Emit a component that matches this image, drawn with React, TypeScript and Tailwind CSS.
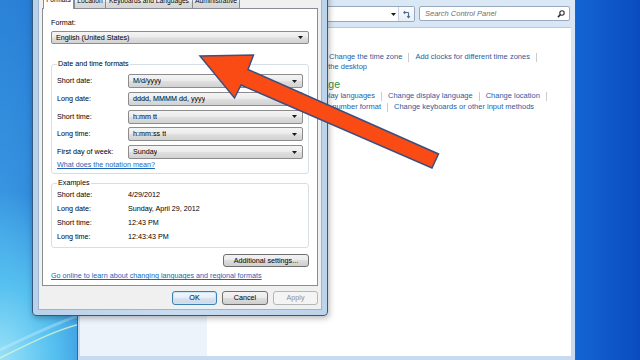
import type { ReactNode } from 'react';

function Caret() {
  return (
    <svg width="5" height="3" viewBox="0 0 5 3" className="shrink-0">
      <path d="M0 0H5L2.5 3Z" fill="#1a1a1a" />
    </svg>
  );
}

function Combo({ value, className = 'h-[14px]' }: { value: string; className?: string }) {
  return (
    <div
      className={`flex-1 flex items-center justify-between pl-[4px] pr-[5px] rounded-[2px] border border-[#8c8c8c] bg-[linear-gradient(#f4f4f4,#ececec_45%,#dedede_55%,#d2d2d2)] ${className}`}
    >
      <span className="truncate">{value}</span>
      <Caret />
    </div>
  );
}

const buttonKinds = {
  normal: 'border-[#707070] bg-[linear-gradient(#f2f2f2,#ebebeb_50%,#dddddd_50%,#cfcfcf)] text-black',
  primary:
    'border-[#3c7fb1] bg-[linear-gradient(#f2f6fa,#e6eef6_50%,#d8e3ee_50%,#cad9e8)] shadow-[inset_0_0_0_1px_#c8e6f8] text-black',
  disabled: 'border-[#b3b7ba] bg-[#f4f4f4] text-[#8f8f8f]',
};

function Button({
  children,
  kind = 'normal',
  className = '',
}: {
  children: ReactNode;
  kind?: keyof typeof buttonKinds;
  className?: string;
}) {
  return (
    <div className={`flex items-center justify-center rounded-[3px] border ${buttonKinds[kind]} ${className}`}>
      {children}
    </div>
  );
}

function Sep() {
  return <span className="shrink-0 mx-[6px] w-px h-[9px] bg-[#c9cdd3]" />;
}

function Tab({ label, className }: { label: string; className: string }) {
  return (
    <div
      className={`flex justify-center pt-[1px] border-t border-l border-[#898c95] bg-[linear-gradient(#f6f6f6,#eaeaea_50%,#dddddd_50%,#d5d5d5)] text-[6.7px] leading-[8px] whitespace-nowrap ${className}`}
    >
      {label}
    </div>
  );
}

const dateRows = [
  ['Short date:', 'M/d/yyyy'],
  ['Long date:', 'dddd, MMMM dd, yyyy'],
  ['Short time:', 'h:mm tt'],
  ['Long time:', 'h:mm:ss tt'],
  ['First day of week:', 'Sunday'],
];

const examples = [
  ['Short date:', '4/29/2012'],
  ['Long date:', 'Sunday, April 29, 2012'],
  ['Short time:', '12:43 PM'],
  ['Long time:', '12:43:43 PM'],
];

function RegionDialog() {
  return (
    <div className="absolute left-[32px] top-[-14px] w-[296px] h-[330px] p-[5px] rounded-b-[4px] border border-[#34597f] bg-[linear-gradient(90deg,#b9d1ea,#c8dcf1_50%,#bcd3ec)] shadow-[1px_2px_6px_rgba(0,0,0,0.3)]">
      <div className="h-full flex flex-col px-[3px] bg-[#f0f0f0] border border-[#9db4cc] text-[7.2px] leading-[10px]">
        {/* tabs */}
        <div className="h-[15px] shrink-0 flex items-end pl-[1px]">
          <div className="relative z-10 w-[31px] h-[16px] -mb-[1px] flex justify-center pt-[2px] bg-white border border-b-0 border-[#898c95] text-[6.7px] leading-[8px]">
            Formats
          </div>
          <Tab label="Location" className="w-[31px] h-[13px]" />
          <Tab label="Keyboards and Languages" className="w-[87px] h-[13px]" />
          <Tab label="Administrative" className="w-[48px] h-[13px] border-r" />
        </div>

        {/* tab page */}
        <div className="flex-1 flex flex-col px-[8px] pt-[9px] bg-white border border-[#898c95]">
          <div className="h-[10px]">Format:</div>
          <div className="mt-[3px] flex">
            <Combo value="English (United States)" className="h-[13px]" />
          </div>

          <fieldset className="mt-[15px] px-[5px] pt-[5px] pb-[3px] rounded-[3px] border border-[#d5dfe5]">
            <legend className="px-[1px] h-[10px]">Date and time formats</legend>
            <div className="flex flex-col gap-[3.75px]">
              {dateRows.map(([label, value]) => (
                <div key={label} className="flex items-center h-[14px]">
                  <span className="w-[71px] shrink-0">{label}</span>
                  <Combo value={value} />
                </div>
              ))}
            </div>
            <div className="mt-[1px] h-[10px] text-[#1c64b4] underline">What does the notation mean?</div>
          </fieldset>

          <fieldset className="mt-[4px] px-[5px] pb-[3px] rounded-[3px] border border-[#d5dfe5]">
            <legend className="px-[1px] h-[10px]">Examples</legend>
            {examples.map(([label, value]) => (
              <div key={label} className="flex items-center h-[14px]">
                <span className="w-[71px] shrink-0">{label}</span>
                <span>{value}</span>
              </div>
            ))}
          </fieldset>

          <div className="mt-[6px] flex justify-end">
            <Button className="w-[86px] h-[13px]">Additional settings...</Button>
          </div>
          <div className="mt-[4px] h-[10px] text-[#1c64b4] underline whitespace-nowrap">
            Go online to learn about changing languages and regional formats
          </div>
        </div>

        {/* buttons */}
        <div className="h-[23px] shrink-0 flex justify-end items-start gap-[5px] pt-[5px]">
          <Button kind="primary" className="w-[45px] h-[14px]">OK</Button>
          <Button className="w-[46px] h-[14px]">Cancel</Button>
          <Button kind="disabled" className="w-[45px] h-[14px]">Apply</Button>
        </div>
      </div>
    </div>
  );
}

function ControlPanel() {
  return (
    <div className="absolute left-[77px] top-[-8px] w-[499px] h-[369px] flex flex-col pl-[2px] pr-[4px] border border-[#3d638e] bg-[linear-gradient(180deg,#dbe8f6,#cddff2_40%,#c6daf0)]">
      {/* caption buttons */}
      <div className="absolute top-[-7px] right-[7px] flex gap-[4px]">
        <div className="w-[18px] h-[10px] rounded-b-[3px] border border-[#55708f] bg-[linear-gradient(#dfe9f4,#c5d6e8)]" />
        <div className="w-[16px] h-[10px] rounded-b-[3px] border border-[#55708f] bg-[linear-gradient(#dfe9f4,#c5d6e8)]" />
        <div className="w-[16px] h-[10px] rounded-b-[3px] border border-[#55708f] bg-[linear-gradient(#dfe9f4,#c5d6e8)]" />
      </div>

      {/* address + search */}
      <div className="h-[34px] shrink-0 flex items-start gap-[4px] pt-[13px] pr-[1px]">
        <div className="w-[56px] h-[16px]" />
        <div className="flex-1 h-[16px] flex items-center bg-white border border-[#97a8bd] rounded-[2px]">
          <div className="flex-1" />
          <div className="mr-[2px]">
            <Caret />
          </div>
          <div className="w-px h-full bg-[#c8d3df]" />
          <div className="w-[15px] h-full flex items-center justify-center bg-[linear-gradient(#fbfcfd,#e9eff6)]">
            <svg width="9" height="9" viewBox="0 0 9 9" fill="none" stroke="#4d6d8f" strokeWidth="1.1">
              <path d="M6.5 2.5H1.8M3.2 1.1L1.8 2.5L3.2 3.9" />
              <path d="M6.5 2.5V7.6M5.1 6.2L6.5 7.6L7.9 6.2" />
            </svg>
          </div>
        </div>
        <div className="w-[151px] h-[15px] flex items-center justify-between pl-[5px] pr-[4px] bg-white border border-[#9aa9bd] rounded-[2px] text-[7.5px] italic text-[#6f6f6f]">
          <span>Search Control Panel</span>
          <svg width="8" height="8" viewBox="0 0 8 8" fill="none" stroke="#2f2f2f">
            <circle cx="5" cy="3" r="2.2" strokeWidth="1.1" />
            <path d="M3.4 4.6L0.9 7.1" strokeWidth="1.5" />
          </svg>
        </div>
      </div>

      {/* body */}
      <div className="flex-1 flex border-t border-[#b9c9dc] bg-white">
        <div className="w-[127px] shrink-0 bg-[#ecf3fb]" />
        <div className="flex-1 flex flex-col pt-[10px] text-[7.5px] leading-[10px] text-[#2b5c9f] whitespace-nowrap">
          <div className="h-[13px] pl-[30px] text-[10.5px] leading-[13px] text-[#2f8f3a]">Date and Time</div>
          <div className="mt-[1px] h-[10px] flex items-center">
            <span className="w-[109px] shrink-0 text-right">Set the time and date</span>
            <Sep />
            <span>Change the time zone</span>
            <Sep />
            <span>Add clocks for different time zones</span>
            <Sep />
          </div>
          <div className="h-[10px] flex items-center">
            <span className="w-[160px] shrink-0 text-right">Add the Clock gadget to the desktop</span>
          </div>
          <div className="mt-[6px] h-[13px] flex items-center text-[10.5px] leading-[13px] text-[#2f8f3a]">
            <span className="w-[133px] shrink-0 text-right">Region and Language</span>
          </div>
          <div className="h-[10px] flex items-center">
            <span className="w-[168px] shrink-0 text-right">Install or uninstall display languages</span>
            <Sep />
            <span>Change display language</span>
            <Sep />
            <span>Change location</span>
            <Sep />
          </div>
          <div className="mt-[1px] h-[10px] flex items-center">
            <span className="w-[174px] shrink-0 text-right">Change the date, time, or number format</span>
            <Sep />
            <span>Change keyboards or other input methods</span>
          </div>
        </div>
      </div>
      <div className="h-[4px] shrink-0" />
    </div>
  );
}

export default function App() {
  return (
    <div className="relative w-[640px] h-[360px] overflow-hidden [font-family:Liberation_Sans,Arial,sans-serif] text-black bg-[radial-gradient(ellipse_120px_170px_at_0px_360px,#9ae2f8_0%,#56c0f0_45%,rgba(60,160,230,0)_100%),radial-gradient(ellipse_90px_360px_at_0px_260px,rgba(70,170,235,0.7)_0%,rgba(70,170,235,0)_100%),linear-gradient(90deg,#2478d2_0px,#1f70d0_100px,#1464d4_576px,#0a4cc0_640px)]">
      {/* desktop swoosh */}
      <svg className="absolute left-0 top-[300px]" width="80" height="60" viewBox="0 0 80 60" fill="none">
        <path d="M0 58C25 46 50 32 80 24" stroke="#dff7cf" strokeOpacity="0.75" strokeWidth="1.4" />
        <path d="M0 50C25 38 50 26 80 15" stroke="#d6f3ff" strokeOpacity="0.35" strokeWidth="3" />
      </svg>

      <ControlPanel />
      <RegionDialog />

      {/* annotation arrow */}
      <svg className="absolute inset-0 pointer-events-none" width="640" height="360" viewBox="0 0 640 360">
        <polygon
          points="200,56 253.5,55 248,69.5 438.5,154 432,168 241,85 234.5,98"
          fill="#fb4b15"
          stroke="#3d4f7e"
          strokeWidth="1.5"
          strokeLinejoin="miter"
        />
      </svg>
    </div>
  );
}
